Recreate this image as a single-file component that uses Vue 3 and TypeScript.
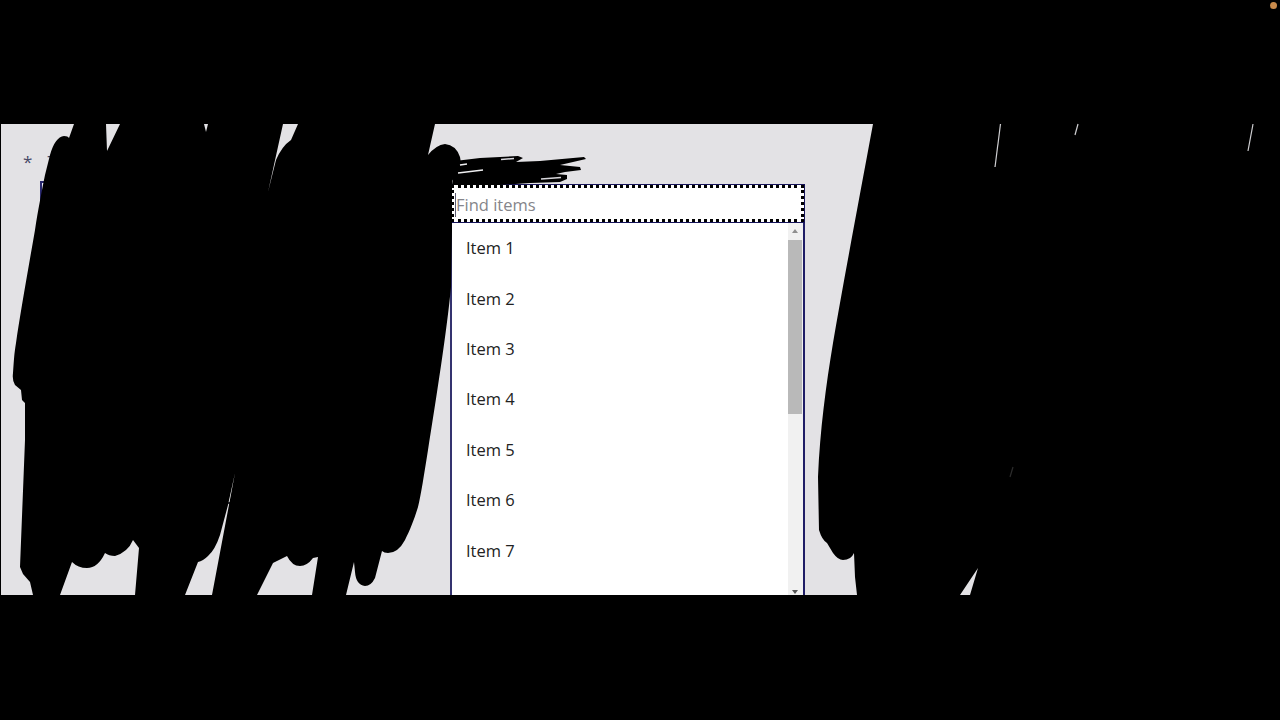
<script setup lang="ts">
const items: string[] = ['Item 1', 'Item 2', 'Item 3', 'Item 4', 'Item 5', 'Item 6', 'Item 7']
</script>

<template>
  <div class="page">
    <main class="stage">
      <section class="form-col">
        <div class="label"><span class="req">*</span><span class="label-text">T</span></div>
        <div class="field"></div>
        <div class="panel"></div>
      </section>
      <section class="dropdown">
        <div class="search">
          <div class="search-inner">
            <span class="caret"></span>
            <span class="placeholder">Find items</span>
          </div>
        </div>
        <div class="list">
          <ul class="items">
            <li v-for="item in items" :key="item" class="item">{{ item }}</li>
          </ul>
          <div class="scrollbar">
            <div class="arrow-cell"><span class="arrow-up"></span></div>
            <div class="thumb"></div>
            <div class="track"></div>
            <div class="arrow-cell bottom"><span class="arrow-down"></span></div>
          </div>
        </div>
      </section>
    </main>

    <svg class="scribble" viewBox="0 0 1280 720" aria-hidden="true">
      <path
        d="M74,124 L106,124 L107,151 L120,124 L204,124 L206,132 L208,124 L283,124 L268,192 L276,160 Q282,146 291,140 L298,124 L435,124 L428,155 Q436,145 445,144 Q456,145 460,157 Q462,166 458,172 L452,181 L452,230 L451,287 C447,330 436,400 428,450 C424,475 421,495 418,507 C414,520 410,530 405,540 Q398,553 388,553 Q384,553 382,551 L375,578 Q371,586 365,586 Q356,585 355,572 L354,562 L346,595 L312,595 L318,557 L313,558 Q307,566 300,566 Q292,566 287,556 Q279,560 273,563 L257,595 L212,595 L235,473 L228,505 L220,535 Q215,550 208,556 Q203,561 198,562 L185,595 L135,595 L139,548 L133,540 Q128,552 115,556 Q109,556 105,553 Q98,568 87,568 Q78,568 72,562 L60,595 L33,595 L30,582 L23,574 L20,567 L25,440 L25,403 L22,400 L21,390 L15,385 Q12,380 13,373 C14,360 14,355 16,343 C20,315 28,270 35,230 C38,210 42,190 45,175 L50,155 Q55,137 64,136 Q68,136 69,138 Z"
        fill="#000"
      />
      <path
        d="M873,124 C858,205 842,290 833,343 C826,385 820,430 818,477 L819,530 Q822,540 827,543 L833,553 Q838,560 843,560 Q851,560 854,553 L855,577 L857,595 L960,595 L978,568 L970,595 L1280,595 L1280,124 Z"
        fill="#000"
      />
      <path class="sliver" d="M1000.5,124 L995,167" />
      <path class="sliver" d="M1078,124 L1075,135" />
      <path class="sliver" d="M1253,124 L1248,151" />
      <path class="sliver dim" d="M1013,467 L1010,477" />
      <path
        d="M455,161 L480,158 L500,157 L518,156 L523,158 L516,162 L540,161 L584,157 L586,159 L560,165 L580,167 L581,170 L565,172 L556,174 L567,175 L567,179 L560,182 L530,183 L500,185 L452,185 Z"
        fill="#000"
      />
      <path class="ink-gap" d="M501,159.5 L514,158.5" />
      <path class="ink-gap" d="M541,179 L561,177.5" />
      <path class="ink-light" d="M460,165 L467,164" />
      <path class="ink-light" d="M458,173 L483,170" />
    </svg>

    <span class="status-dot"></span>
  </div>
</template>

<style>
html,
body {
  margin: 0;
  background: #000;
}
</style>

<style scoped>
.page {
  position: relative;
  width: 1280px;
  height: 720px;
  padding-top: 124px;
  box-sizing: border-box;
  overflow: hidden;
  background: #000;
  font-family: "Open Sans", "Liberation Sans", sans-serif;
}

.stage {
  display: flex;
  height: 471px;
  box-sizing: border-box;
  overflow: hidden;
  border-left: 1px solid #000;
  background: #e3e2e5;
}

.form-col {
  display: flex;
  flex-direction: column;
  align-items: flex-start;
  width: 449px;
  padding: 28px 0 0 22px;
  box-sizing: border-box;
}

.label {
  display: flex;
  gap: 15px;
  height: 20px;
  color: #4a4a68;
  font-size: 17px;
  line-height: 20px;
}

.field {
  width: 200px;
  height: 30px;
  margin: 9px 0 0 17px;
  box-sizing: border-box;
  border: 2px solid #2b2a70;
  background: #e9e8f6;
}

.panel {
  width: 300px;
  height: 50px;
  margin: 243px 0 0 17px;
  box-sizing: border-box;
  border-bottom: 2px solid #3a3a44;
  background: #fff;
}

.dropdown {
  display: flex;
  flex-direction: column;
  width: 355px;
  margin-top: 60px;
  min-height: 0;
}

.search {
  height: 39px;
  box-sizing: border-box;
  border: 1px solid #16145a;
  background: #fff;
}

.search-inner {
  display: flex;
  align-items: center;
  height: 100%;
  box-sizing: border-box;
  padding: 2px 0 0 1px;
  border: 3px dotted #000;
}

.caret {
  width: 1px;
  height: 24px;
  background: #5a5a70;
}

.placeholder {
  margin-left: 0;
  color: #85858a;
  font-size: 16.5px;
  line-height: 24px;
}

.list {
  display: flex;
  flex: 1;
  min-height: 0;
  box-sizing: border-box;
  border-right: 2px solid #1f1d66;
  border-left: 2px solid #34336f;
  background: #fff;
}

.items {
  flex: 1;
  margin: -0.5px 0 0;
  padding: 0;
  list-style: none;
}

.item {
  display: flex;
  align-items: center;
  height: 50.4px;
  padding-left: 14px;
  color: #222;
  font-size: 16.5px;
}

.scrollbar {
  display: flex;
  flex-direction: column;
  width: 15px;
  background: #f1f1f1;
}

.arrow-cell {
  display: flex;
  flex: none;
  justify-content: center;
  height: 17px;
  margin-right: 1px;
  padding-top: 6px;
  box-sizing: border-box;
}

.arrow-cell.bottom {
  align-items: flex-end;
  padding: 0 0 1px;
}

.arrow-up,
.arrow-down {
  width: 0;
  height: 0;
  border-right: 3.5px solid transparent;
  border-left: 3.5px solid transparent;
}

.arrow-up {
  border-bottom: 4px solid #8f8f8f;
}

.arrow-down {
  border-top: 4px solid #555;
}

.thumb {
  flex: none;
  height: 174px;
  margin-right: 1px;
  background: #b9b9b9;
}

.track {
  flex: 1;
}

.scribble {
  position: absolute;
  top: 0;
  left: 0;
  width: 1280px;
  height: 720px;
  pointer-events: none;
}

.sliver {
  fill: none;
  stroke: #cfcfd2;
  stroke-width: 1.2;
}

.sliver.dim {
  stroke: #2c2c2c;
}

.ink-gap {
  fill: none;
  stroke: #d8d7dc;
  stroke-width: 1.5;
}

.ink-light {
  fill: none;
  stroke: #eeeef0;
  stroke-width: 1.5;
}

.status-dot {
  position: absolute;
  top: 2px;
  left: 1270px;
  width: 7px;
  height: 7px;
  border-radius: 50%;
  background: #c98a4b;
}
</style>
